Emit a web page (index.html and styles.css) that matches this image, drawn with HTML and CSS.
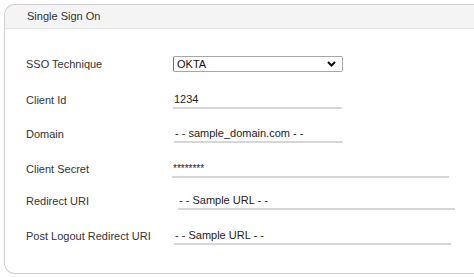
FILE: index.html
```html
<!DOCTYPE html>
<html lang="en">
<head>
    <meta charset="UTF-8">
    <title>Single Sign On</title>
    <link rel="stylesheet" href="styles.css">
</head>
<body>

<div class="panel">
    <div class="panel-head">Single Sign On</div>

    <form class="panel-body">
        <div class="row">
            <label>SSO Technique</label>
            <div class="select-wrap">
                <select name="technique">
                    <option value="OKTA" selected>OKTA</option>
                    <option value="AZURE">AZURE</option>
                </select>
                <svg class="chevron" width="9" height="6" viewBox="0 0 9 6">
                    <path d="M1 1 L4.5 4.5 L8 1" fill="none" stroke="#111" stroke-width="2"/>
                </svg>
            </div>
        </div>

        <div class="row mt-16">
            <label>Client Id</label>
            <input type="text" class="short" value="1234">
        </div>

        <div class="row">
            <label>Domain</label>
            <input type="text" class="short shift-1" value="- - sample_domain.com - -">
        </div>

        <div class="row mt-15">
            <label>Client Secret</label>
            <input type="text" class="long secret shift-n1" value="********">
        </div>

        <div class="row mt-12">
            <label>Redirect URI</label>
            <input type="text" class="long shift-5" value="- - Sample URL - -">
        </div>

        <div class="row mt-15">
            <label>Post Logout Redirect URI</label>
            <input type="text" class="long shift-1" value="- - Sample URL - -">
        </div>
    </form>
</div>

</body>
</html>
```

FILE: styles.css
```css
body {
    font-family: "Liberation Sans", Arial, sans-serif;
    font-size: 11px;
    color: #333;
    margin: 0;
    padding: 4px 0 4px 4px;
    background-color: #fff;
}
.panel {
    border: 1px solid #cfcfcf;
    border-right: none;
    border-radius: 11px 0 0 11px;
}
.panel-head {
    background-color: #f4f4f4;
    border-bottom: 1px solid #e2e2e2;
    border-top-left-radius: 11px;
    height: 23px;
    line-height: 23px;
    padding-left: 22px;
}
.panel-body {
    display: flex;
    flex-direction: column;
    gap: 14px;
    padding: 25px 0 27px 21px;
}
.row {
    display: flex;
    align-items: center;
    height: 20px;
}
.row label {
    width: 147px;
    flex: none;
}
.mt-16 { margin-top: 2px; }
.mt-15 { margin-top: 1px; }
.mt-12 { margin-top: -2px; }

.select-wrap {
    position: relative;
}
select {
    appearance: none;
    -webkit-appearance: none;
    display: block;
    width: 170px;
    height: 16px;
    margin: 0;
    padding: 0 0 0 3px;
    border: 1px solid #a6a6a6;
    border-left-color: #707070;
    border-radius: 2px;
    background-color: #fff;
    font-family: inherit;
    font-size: 11px;
    color: #111;
}
.chevron {
    position: absolute;
    right: 7px;
    top: 5px;
    pointer-events: none;
}
input {
    box-sizing: border-box;
    height: 17px;
    margin: 0;
    padding: 0 1px;
    border: none;
    border-bottom: 2px solid #d6d6d6;
    background: transparent;
    font-family: inherit;
    font-size: 11px;
    color: #222;
    outline: none;
}
input.short {
    width: 169px;
}
input.long {
    width: 277px;
}
input.secret {
    font-size: 10px;
}
.shift-1 { margin-left: 1px; }
.shift-5 { margin-left: 5px; }
.shift-n1 { margin-left: -1px; }
```
